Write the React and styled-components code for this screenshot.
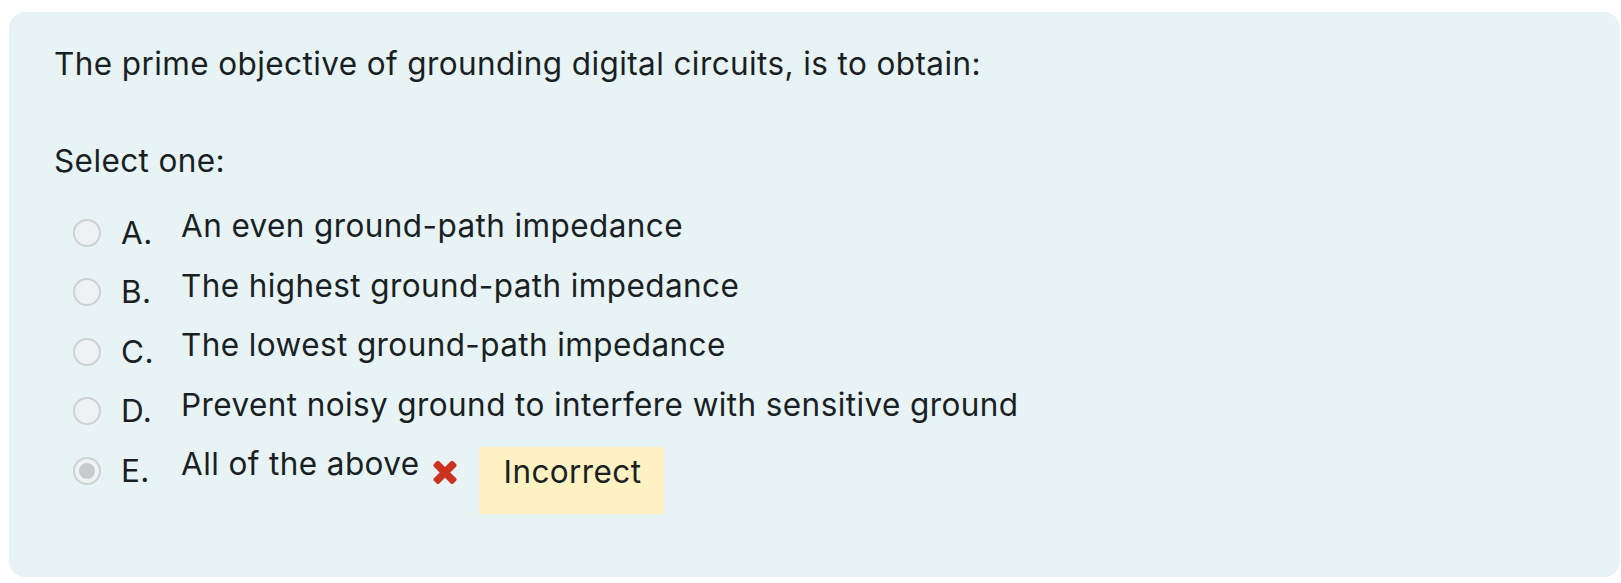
import React from "react";
import styled, { createGlobalStyle } from "styled-components";

const Global = createGlobalStyle`
  html, body { margin: 0; padding: 0; background: #ffffff; }
  body { font-family: Inter, Roboto, "Liberation Sans", Arial, sans-serif; color: #1a1f24; }
`;

const Panel = styled.div`
  box-sizing: border-box;
  margin: 12px 1px 0 9px;
  height: 565px;
  border-radius: 16px;
  background: #e7f3f5;
  padding: 32px 40px 0 45px;
  font-size: 31.5px;
  letter-spacing: 0.4px;
  line-height: 40px;
`;

const Question = styled.div`
  margin: 0;
`;

const Prompt = styled.div`
  margin-top: 57px;
`;

const Answers = styled.div`
  margin-top: 25px;
  display: flex;
  flex-direction: column;
  gap: 12.9px;
`;

const Row = styled.div`
  display: flex;
  align-items: flex-start;
`;

const Radio = styled.span`
  box-sizing: border-box;
  flex: none;
  width: 28px;
  height: 28px;
  margin: 12.6px 20px 0 19px;
  border-radius: 50%;
  border: 2px solid #cfd2d3;
  background: #eef2f3;
  display: flex;
  align-items: center;
  justify-content: center;
  &::after {
    content: "";
    display: ${(p) => (p.checked ? "block" : "none")};
    width: 16px;
    height: 16px;
    border-radius: 50%;
    background: #c8c9ca;
  }
`;

const Letter = styled.span`
  flex: none;
  width: 60px;
  margin-top: 6.7px;
`;

const AnswerText = styled.span`
  display: flex;
  align-items: flex-start;
`;

const Cross = styled.svg`
  flex: none;
  width: 24px;
  height: 24px;
  margin: 15.5px 22px 0 13px;
  fill: #cb3321;
`;

const Outcome = styled.div`
  margin-top: 2.6px;
  padding: 5px 23px 22px 25px;
  background: #fff2c2;
`;

const answers = [
  { l: "A.", t: "An even ground-path impedance" },
  { l: "B.", t: "The highest ground-path impedance" },
  { l: "C.", t: "The lowest ground-path impedance" },
  { l: "D.", t: "Prevent noisy ground to interfere with sensitive ground" },
  { l: "E.", t: "All of the above", checked: true, wrong: true },
];

export default function App() {
  return (
    <>
      <Global />
      <Panel>
        <Question>The prime objective of grounding digital circuits, is to obtain:</Question>
        <Prompt>Select one:</Prompt>
        <Answers>
          {answers.map((a) => (
            <Row key={a.l}>
              <Radio checked={a.checked} />
              <Letter>{a.l}</Letter>
              <AnswerText>
                {a.t}
                {a.wrong && (
                  <>
                    <Cross viewBox="110 218 1188 1228">
                      <path d="M1298 1214q0 40-28 68l-136 136q-28 28-68 28t-68-28l-294-294-294 294q-28 28-68 28t-68-28l-136-136q-28-28-28-68t28-68l294-294-294-294q-28-28-28-68t28-68l136-136q28-28 68-28t68 28l294 294 294-294q28-28 68-28t68 28l136 136q28 28 28 68t-28 68l-294 294 294 294q28 28 28 68z" />
                    </Cross>
                    <Outcome>Incorrect</Outcome>
                  </>
                )}
              </AnswerText>
            </Row>
          ))}
        </Answers>
      </Panel>
    </>
  );
}
